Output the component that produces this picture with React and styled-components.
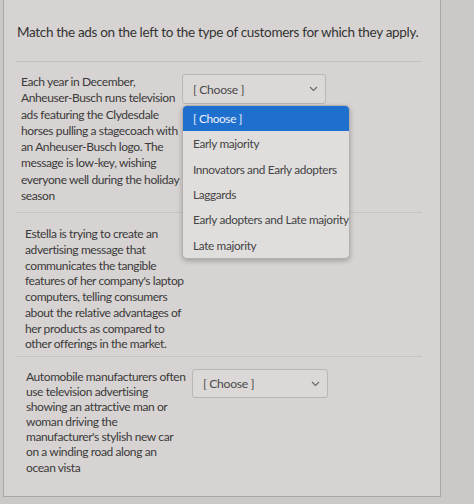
import React from 'react'
import styled, { createGlobalStyle } from 'styled-components'

const GlobalStyle = createGlobalStyle`
  html, body {
    margin: 0;
    padding: 0;
    background: #cbc8c7;
    font-family: Lato, "Open Sans", sans-serif;
    color: #383838;
  }
`

const Page = styled.div`
  width: 474px;
  height: 504px;
  overflow: hidden;
  padding: 0 33px 0 3px;
  box-sizing: border-box;
`

const Card = styled.div`
  background: #d7d3d2;
  border: 1px solid #a9a6a5;
  border-top: none;
  padding: 22px 12px 21px 12px;
  box-sizing: border-box;
  width: 438px;
`

const Title = styled.div`
  font-size: 13.5px;
  letter-spacing: -0.32px;
  line-height: 20px;
  white-space: nowrap;
  color: #333;
  padding: 0 0 19px 1px;
  border-bottom: 1px solid #c4c0bf;
  margin-right: 6px;
`

const Row = styled.div`
  display: flex;
  align-items: flex-start;
  gap: 3px;
  padding: ${p => p.$pad || '12px 0 8px 5px'};
  border-bottom: ${p => (p.$last ? 'none' : '1px solid #c6c2c1')};
  margin-right: 6px;
`

const Prompt = styled.div`
  width: ${p => p.$w || '158px'};
  font-size: 12px;
  letter-spacing: -0.4px;
  line-height: ${p => p.$lh || '16.3px'};
  color: #3a3a3a;
  flex-shrink: 0;
`

const Line = styled.div`
  white-space: nowrap;
`

const SelectWrap = styled.div`
  position: relative;
`

const Select = styled.div`
  width: ${p => p.$w || '144px'};
  height: ${p => p.$h || '30px'};
  box-sizing: border-box;
  border: 1px solid #b9b6b5;
  border-radius: 3px;
  background: #dbd8d7;
  display: flex;
  align-items: center;
  justify-content: space-between;
  padding: 0 7px 0 10px;
  font-size: 12.2px;
  letter-spacing: -0.3px;
  color: #4a4a4a;
`

const Menu = styled.div`
  position: absolute;
  left: 0;
  top: 31px;
  width: 166px;
  background: #e0dedd;
  border: 1px solid #b3b0af;
  border-radius: 5px;
  box-shadow: 0 2px 5px rgba(0, 0, 0, 0.25);
  overflow: hidden;
  z-index: 2;
`

const Option = styled.div`
  height: 25.3px;
  display: flex;
  align-items: center;
  padding-left: 10px;
  font-size: 11.8px;
  letter-spacing: -0.35px;
  white-space: nowrap;
  color: ${p => (p.$active ? '#eef3fb' : '#444')};
  background: ${p => (p.$active ? '#1f6fce' : 'transparent')};
`

const Chevron = () => (
  <svg width="9" height="6" viewBox="0 0 9 6">
    <path d="M1 1l3.5 3.5L8 1" fill="none" stroke="#6a6868" strokeWidth="1.2" />
  </svg>
)

const options = [
  '[ Choose ]',
  'Early majority',
  'Innovators and Early adopters',
  'Laggards',
  'Early adopters and Late majority',
  'Late majority',
]

const ads = [
  [
    'Each year in December,',
    'Anheuser-Busch runs television',
    'ads featuring the Clydesdale',
    'horses pulling a stagecoach with',
    'an Anheuser-Busch logo. The',
    'message is low-key, wishing',
    'everyone well during the holiday',
    'season',
  ],
  [
    'Estella is trying to create an',
    'advertising message that',
    'communicates the tangible',
    "features of her company's laptop",
    'computers, telling consumers',
    'about the relative advantages of',
    'her products as compared to',
    'other offerings in the market.',
  ],
  [
    'Automobile manufacturers often',
    'use television advertising',
    'showing an attractive man or',
    'woman driving the',
    "manufacturer's stylish new car",
    'on a winding road along an',
    'ocean vista',
  ],
]

const Text = ({ lines, lh, w }) => (
  <Prompt $lh={lh} $w={w}>
    {lines.map(l => (
      <Line key={l}>{l}</Line>
    ))}
  </Prompt>
)

export default function App() {
  return (
    <Page>
      <GlobalStyle />
      <Card>
        <Title>Match the ads on the left to the type of customers for which they apply.</Title>
        <Row>
          <Text lines={ads[0]} />
          <SelectWrap>
            <Select>
              <span>[ Choose ]</span>
              <Chevron />
            </Select>
            <Menu>
              {options.map((o, i) => (
                <Option key={o} $active={i === 0}>{o}</Option>
              ))}
            </Menu>
          </SelectWrap>
        </Row>
        <Row $pad="13px 0 4px 9px">
          <Text lines={ads[1]} lh="15.7px" />
        </Row>
        <Row $pad="12px 0 0 10px" $last>
          <Text lines={ads[2]} lh="15.1px" w="163px" />
          <Select $w="136px" $h="29px">
            <span>[ Choose ]</span>
            <Chevron />
          </Select>
        </Row>
      </Card>
    </Page>
  )
}
